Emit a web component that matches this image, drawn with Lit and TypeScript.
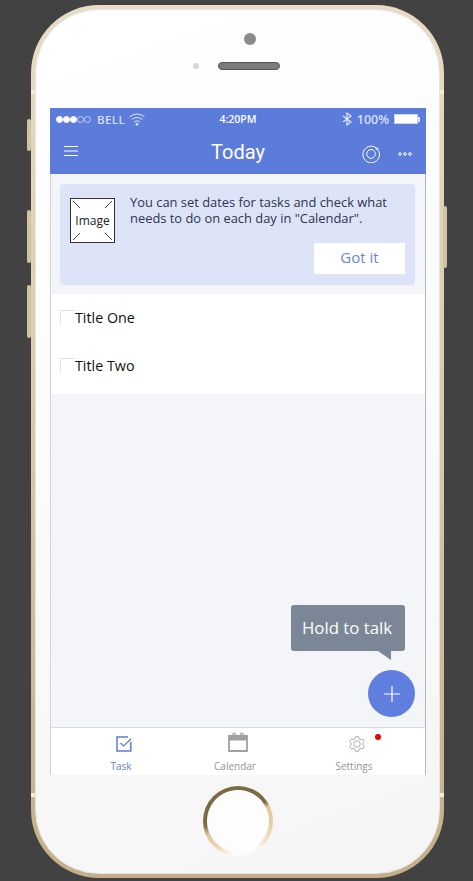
import { LitElement, css, html } from "lit";
import { customElement } from "lit/decorators.js";

@customElement("app-root")
export class AppRoot extends LitElement {
    static styles = css`
        :host {
            display: block;
            width: 473px;
            height: 881px;
            overflow: hidden;
            background: #424242;
            font-family: "Open Sans", "Noto Sans", sans-serif;
        }
        .phone {
            position: relative;
            box-sizing: border-box;
            width: 413px;
            height: 873px;
            margin: 5px 0 0 31px;
            padding: 4px;
            border-radius: 68px;
            background: linear-gradient(180deg, #e9dcc3 0%, #d9c8a6 50%, #c4af88 100%);
        }
        .side {
            position: absolute;
            width: 4px;
            border-radius: 2px;
            background: #cfc3a1;
        }
        .side.a { left: -4px; top: 114px; height: 32px; }
        .side.b { left: -4px; top: 205px; height: 53px; }
        .side.c { left: -4px; top: 280px; height: 53px; }
        .side.d { right: -3px; top: 201px; height: 62px; }
        .band {
            position: absolute;
            width: 4px;
            height: 4px;
            background: #f3ecdc;
        }
        .band.tl { left: 0; top: 85px; }
        .band.tr { right: 0; top: 85px; }
        .band.bl { left: 0; top: 788px; }
        .band.br { right: 0; top: 788px; }
        .face {
            box-sizing: border-box;
            height: 100%;
            padding: 4px 14px 0 14px;
            border-radius: 64px;
            background: linear-gradient(160deg, #ffffff 0%, #fbfbfb 45%, #f5f5f5 100%);
            border: 1px solid #e2e4e8;
            display: flex;
            flex-direction: column;
            align-items: center;
        }
        .camera {
            width: 12px;
            height: 12px;
            margin: 19px 0 0 24px;
            border-radius: 50%;
            background: #8b8b8e;
        }
        .speaker-row {
            display: flex;
            align-items: center;
            gap: 19px;
            margin-top: 17px;
            margin-right: 3px;
            height: 8px;
        }
        .dot { width: 6px; height: 6px; border-radius: 50%; background: #d6d6d6; }
        .speaker {
            width: 62px;
            height: 8px;
            border-radius: 4px;
            background: #7b7b7b;
            border: 1px solid #555;
            box-sizing: border-box;
        }
        .screen {
            box-sizing: border-box;
            width: 376px;
            height: 667px;
            margin-top: 38px;
            align-self: flex-start;
            display: flex;
            flex-direction: column;
            position: relative;
            background: #f3f5f8;
            border-left: 1px solid #d2d2d6;
            border-right: 1px solid #b5b5b8;
        }
        .head {
            margin: 0 -1px;
            height: 66px;
            background: #5c7cdc;
            color: #fff;
        }
        .status {
            display: grid;
            grid-template-columns: 1fr auto 1fr;
            align-items: center;
            height: 20px;
            padding: 1px 6px 0;
            color: #d6dff8;
            font-size: 11.5px;
            font-weight: 600;
        }
        .status .left, .status .right { display: flex; align-items: center; gap: 4px; }
        .status .left span.name { letter-spacing: 0.4px; }
        .status .right { justify-content: flex-end; font-size: 12.5px; gap: 5px; }
        .status .time { color: #fff; font-size: 10.5px; }
        .signal { display: flex; margin-right: 2px; }
        .signal i { width: 7px; height: 7px; box-sizing: border-box; border-radius: 50%; border: 1px solid #fff; background: #fff; }
        .signal i.off { background: none; border-color: #c4d0f2; }
        .battery { display: flex; align-items: center; }
        .battery b { display: block; box-sizing: border-box; width: 24px; height: 10px; background: #fff; border: 1px solid #c8d3f3; }
        .battery u { display: block; width: 2px; height: 5px; background: #dfe6fa; }
        .nav {
            display: grid;
            grid-template-columns: 1fr auto 1fr;
            align-items: center;
            height: 46px;
            padding: 0 14px;
        }
        .nav .burger { margin-top: -2px; }
        .nav .title { font-family: Roboto, sans-serif; font-size: 20px; line-height: 1; }
        .nav .tools { display: flex; justify-content: flex-end; align-items: center; gap: 18px; margin-top: 4px; }
        svg { display: block; }
        .banner {
            display: grid;
            grid-template-columns: 45px 1fr;
            column-gap: 15px;
            height: 101px;
            box-sizing: border-box;
            margin: 10px 10px 9px 9px;
            padding: 14px 10px 11px 10px;
            border-radius: 4px;
            background: #dee4f7;
        }
        .ph {
            position: relative;
            box-sizing: border-box;
            width: 45px;
            height: 45px;
            border: 1px solid #333;
            background: #fff;
            display: flex;
            align-items: center;
            justify-content: center;
            font-size: 12px;
            color: #222;
        }
        .ph svg { position: absolute; inset: 0; }
        .copy { margin-top: -4px; font-size: 12.9px; line-height: 16px; color: #2d3350; }
        .got {
            grid-column: 2;
            justify-self: end;
            align-self: end;
            box-sizing: border-box;
            width: 91px;
            height: 31px;
            margin-top: -14px;
            padding-bottom: 4px;
            background: #fff;
            color: #6c85d8;
            font-size: 15px;
            display: flex;
            align-items: center;
            justify-content: center;
        }
        .list { background: #fff; padding-bottom: 4px; }
        .item {
            display: flex;
            align-items: center;
            box-sizing: border-box;
            height: 48px;
            padding: 0 0 2px 9px;
            font-size: 14.3px;
            color: #111;
        }
        .check {
            box-sizing: border-box;
            width: 15px;
            height: 15px;
            margin-top: 1px;
            border-left: 1px solid #e4e4e4;
            border-top: 1px solid #e4e4e4;
        }
        .spacer { flex: 1; }
        .tip {
            position: absolute;
            right: 20px;
            bottom: 124px;
            box-sizing: border-box;
            width: 114px;
            height: 46px;
            padding: 0 2px 2px 0;
            border-radius: 3px;
            background: #7b8696;
            color: #fff;
            font-size: 16.8px;
            display: flex;
            align-items: center;
            justify-content: center;
        }
        .tip::after {
            content: "";
            position: absolute;
            right: 14px;
            bottom: -9px;
            border-left: 13px solid transparent;
            border-top: 9px solid #7b8696;
        }
        .fab {
            position: absolute;
            right: 10px;
            bottom: 58px;
            width: 47px;
            height: 47px;
            border-radius: 50%;
            background: #5f7edd;
            display: flex;
            align-items: center;
            justify-content: center;
        }
        .tabs {
            display: grid;
            grid-template-columns: 116px 112px 126px;
            padding-left: 12px;
            height: 48px;
            box-sizing: border-box;
            border-top: 1px solid #d9dbdf;
            background: #fff;
        }
        .tab {
            position: relative;
            display: flex;
            flex-direction: column;
            align-items: center;
            font-size: 10px;
            color: #949494;
        }
        .tab.on { color: #6580c8; }
        .tab .ico { margin-left: 5px; }
        .tab .ico.cal { margin: -3px 0 0 6px; }
        .tab .slot { height: 31px; display: flex; align-items: center; box-sizing: border-box; }
        .badge {
            position: absolute;
            left: 84px;
            top: 6px;
            width: 6px;
            height: 6px;
            border-radius: 50%;
            background: #ee0000;
        }
        .home-wrap { flex: 1; display: flex; align-items: center; justify-content: center; }
        .home {
            box-sizing: border-box;
            width: 70px;
            height: 70px;
            margin-bottom: 6px;
            border-radius: 50%;
            background:
                radial-gradient(circle, #fdfdfd 0 30.5px, transparent 31.5px),
                conic-gradient(#7c6a43 0deg, #7c6a43 55deg, #e3c499 65deg, #e9cfa4 100deg, #f3e2ca 125deg, #fdfdfd 150deg, #fdfdfd 190deg, #f0d8b5 215deg, #e3c499 245deg, #7c6a43 262deg, #7c6a43 360deg);
        }
    `;

    render() {
        return html`
            <div class="phone">
                <span class="side a"></span><span class="side b"></span><span class="side c"></span><span class="side d"></span>
                <span class="band tl"></span><span class="band tr"></span><span class="band bl"></span><span class="band br"></span>
                <div class="face">
                    <div class="camera"></div>
                    <div class="speaker-row"><span class="dot"></span><span class="speaker"></span></div>
                    <div class="screen">
                        <div class="head">
                            <div class="status">
                                <div class="left">
                                    <span class="signal"><i></i><i></i><i></i><i class="off"></i><i class="off"></i></span>
                                    <span class="name">BELL</span>
                                    <svg width="16" height="13" viewBox="0 0 16 13" fill="none" stroke="#dfe6fa" stroke-width="1">
                                        <path d="M.5 4a11 11 0 0 1 15 0M2.700 6.500a8 8 0 0 1 10.600 0M5 9a4.500 4.500 0 0 1 6 0" />
                                        <circle cx="8" cy="11.200" r="1" fill="#dfe6fa" />
                                    </svg>
                                </div>
                                <div class="time">4:20PM</div>
                                <div class="right">
                                    <svg width="10" height="14" viewBox="0 0 10 14" fill="none" stroke="#dfe6fa" stroke-width="1.2">
                                        <path d="M1 4l8 6-4 3V1l4 3-8 6" />
                                    </svg>
                                    <span>100%</span>
                                    <span class="battery"><b></b><u></u></span>
                                </div>
                            </div>
                            <div class="nav">
                                <svg class="burger" width="14" height="10" viewBox="0 0 14 10" stroke="#fff" stroke-width="1"><path d="M0 .5h14M0 5h14M0 9.500h14" /></svg>
                                <div class="title">Today</div>
                                <div class="tools">
                                    <svg width="18" height="18" viewBox="0 0 18 18" fill="none" stroke="#fff" stroke-width="1">
                                        <path d="M14 2.700A8.300 8.300 0 1 0 16.400 5.300" />
                                        <path d="M9 13.600l-1.900-.9A4.300 4.300 0 1 1 10.900 12.700z" />
                                        <circle cx="15" cy="3.800" r="1" />
                                    </svg>
                                    <svg width="14" height="4" viewBox="0 0 14 4" fill="none" stroke="#fff" stroke-width="1">
                                        <circle cx="2" cy="2" r="1.300" /><circle cx="7" cy="2" r="1.300" /><circle cx="12" cy="2" r="1.300" />
                                    </svg>
                                </div>
                            </div>
                        </div>
                        <div class="banner">
                            <div class="ph">
                                <svg width="43" height="43" viewBox="0 0 43 43" stroke="#444" stroke-width="1">
                                    <path d="M2 2l7 7M41 2l-7 7M2 41l7-7M41 41l-7-7" />
                                </svg>
                                Image
                            </div>
                            <div class="copy">You can set dates for tasks and check what needs to do on each day in "Calendar".</div>
                            <div class="got">Got it</div>
                        </div>
                        <div class="list">
                            <div class="item"><span class="check"></span>Title One</div>
                            <div class="item"><span class="check"></span>Title Two</div>
                        </div>
                        <div class="spacer"></div>
                        <div class="tip">Hold to talk</div>
                        <div class="fab">
                            <svg width="16" height="16" viewBox="0 0 16 16" stroke="#fff" stroke-width="1.200"><path d="M8 0v16M0 8h16" /></svg>
                        </div>
                        <div class="tabs">
                            <div class="tab on">
                                <span class="slot">
                                    <svg class="ico" width="16" height="16" viewBox="0 0 16 16" fill="none" stroke="#5f7cc9" stroke-width="1.500">
                                        <path d="M14.800 6V15H1V1h11" /><path d="M4.500 7l3 3L15 3" stroke-width="1.200" />
                                    </svg>
                                </span>
                                Task
                            </div>
                            <div class="tab">
                                <span class="slot">
                                    <svg class="ico cal" width="20" height="20" viewBox="0 0 20 20" fill="none" stroke="#a0a0a0" stroke-width="1.800">
                                        <path d="M1 4h18v15H1z" /><path d="M1 6.500h18" stroke-width="4" /><path d="M5 5V2.200a1.200 1.200 0 0 1 2.400 0V5M12.600 5V2.200a1.200 1.200 0 0 1 2.400 0V5" stroke-width="1.200" />
                                    </svg>
                                </span>
                                Calendar
                            </div>
                            <div class="tab">
                                <span class="slot">
                                    <svg class="ico" width="16" height="16" viewBox="0 0 16 16" fill="none" stroke="#9a9a9a" stroke-width="0.800">
                                        <path d="M6.500 .7h3l.5 2 1.800 1 2-.6 1.500 2.600-1.500 1.500v1.600l1.500 1.500-1.500 2.600-2-.6-1.800 1-.5 2h-3l-.5-2-1.800-1-2 .6-1.500-2.600 1.500-1.500V7.200L.7 5.700l1.500-2.600 2 .6 1.800-1z" />
                                        <circle cx="8" cy="8" r="3.200" />
                                    </svg>
                                </span>
                                Settings
                                <span class="badge"></span>
                            </div>
                        </div>
                    </div>
                    <div class="home-wrap"><div class="home"></div></div>
                </div>
            </div>
        `;
    }
}

declare global {
    interface HTMLElementTagNameMap {
        "app-root": AppRoot;
    }
}
